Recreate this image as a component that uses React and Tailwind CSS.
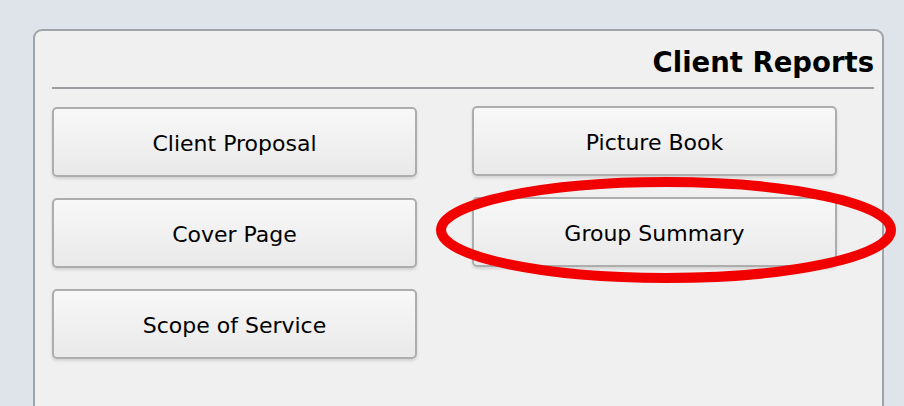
import React from 'react';

const Btn = ({ label }) => (
  <button className="h-[70px] w-[365px] rounded-[5px] border-2 border-[#adadad] bg-gradient-to-b from-[#f8f8f8] to-[#e9e9e9] pt-[2px] text-[22px] text-black shadow-[0_2px_3px_rgba(0,0,0,0.12)]">
    {label}
  </button>
);

export default function App() {
  return (
    <div className="relative h-[406px] w-[904px] overflow-hidden bg-[#dfe3ea] pl-[33px] pt-[29px] font-['DejaVu_Sans',Verdana,sans-serif]">
      <div className="h-[400px] w-[851px] rounded-[9px] border-2 border-[#a0a4a8] bg-[#f0f0f0] pl-[17px] pr-[8px]">
        <div className="flex h-[58px] items-end justify-end border-b-2 border-[#9a9ea3] pb-[11px]">
          <h1 className="text-[27.5px] font-bold leading-none text-black">Client Reports</h1>
        </div>
        <div className="mt-[18px] flex gap-[55px]">
          <div className="flex flex-col gap-[21px]">
            <Btn label="Client Proposal" />
            <Btn label="Cover Page" />
            <Btn label="Scope of Service" />
          </div>
          <div className="-mt-px flex flex-col gap-[21px]">
            <Btn label="Picture Book" />
            <Btn label="Group Summary" />
          </div>
        </div>
      </div>
      {/* red annotation circle */}
      <svg className="pointer-events-none absolute left-0 top-0" width="904" height="406">
        <ellipse cx="666" cy="230" rx="225" ry="48" fill="none" stroke="#f20000" strokeWidth="10" />
      </svg>
    </div>
  );
}
